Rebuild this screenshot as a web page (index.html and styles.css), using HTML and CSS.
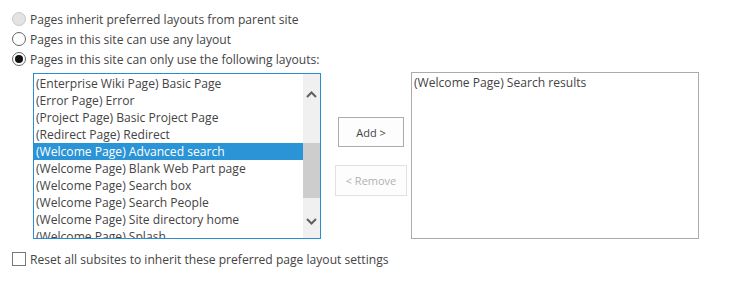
FILE: index.html
```html
<!DOCTYPE html>
<html lang="en">
<head>
    <meta charset="UTF-8">
    <title>Page layouts</title>
    <link rel="stylesheet" href="styles.css">
</head>
<body>

<div class="layout-settings">
    <!-- 继承选项 -->
    <label class="option">
        <input type="radio" name="mode" disabled>
        <span>Pages inherit preferred layouts from parent site</span>
    </label>
    <label class="option">
        <input type="radio" name="mode">
        <span>Pages in this site can use any layout</span>
    </label>
    <label class="option">
        <input type="radio" name="mode" checked>
        <span>Pages in this site can only use the following layouts:</span>
    </label>

    <!-- 布局选择 -->
    <div class="picker">
        <div class="listbox listbox-focus">
            <div class="list-items">
                <div class="item">(Enterprise Wiki Page) Basic Page</div>
                <div class="item">(Error Page) Error</div>
                <div class="item">(Project Page) Basic Project Page</div>
                <div class="item">(Redirect Page) Redirect</div>
                <div class="item selected">(Welcome Page) Advanced search</div>
                <div class="item">(Welcome Page) Blank Web Part page</div>
                <div class="item">(Welcome Page) Search box</div>
                <div class="item">(Welcome Page) Search People</div>
                <div class="item">(Welcome Page) Site directory home</div>
                <div class="item">(Welcome Page) Splash</div>
            </div>
            <div class="scrollbar">
                <div class="arrow arrow-up">
                    <svg width="11" height="7" viewBox="0 0 11 7"><path d="M1 6 L5.5 1.5 L10 6" fill="none" stroke="#606060" stroke-width="2"/></svg>
                </div>
                <div class="track">
                    <div class="thumb"></div>
                </div>
                <div class="arrow arrow-down">
                    <svg width="11" height="7" viewBox="0 0 11 7"><path d="M1 1 L5.5 5.5 L10 1" fill="none" stroke="#606060" stroke-width="2"/></svg>
                </div>
            </div>
        </div>

        <div class="buttons">
            <button class="btn">Add &gt;</button>
            <button class="btn btn-disabled">&lt; Remove</button>
        </div>

        <div class="listbox listbox-right">
            <div class="list-items">
                <div class="item">(Welcome Page) Search results</div>
            </div>
        </div>
    </div>

    <label class="option reset">
        <input type="checkbox">
        <span>Reset all subsites to inherit these preferred page layout settings</span>
    </label>
</div>

</body>
</html>
```

FILE: styles.css
```css
body {
    font-family: "Open Sans", "Noto Sans", sans-serif;
    font-size: 12.1px;
    color: #444444;
    background-color: #ffffff;
    margin: 0;
    padding: 0;
}
.layout-settings {
    padding: 9px 0 0 12px;
}
.option {
    display: flex;
    align-items: center;
    height: 20px;
    white-space: nowrap;
}
.option input {
    appearance: none;
    -webkit-appearance: none;
    width: 14px;
    height: 14px;
    margin: 0 4px 0 0;
    border: 1px solid #666666;
    background-color: #ffffff;
    box-sizing: border-box;
    flex-shrink: 0;
}
.option input[type="radio"] {
    border-radius: 50%;
    display: flex;
    align-items: center;
    justify-content: center;
}
.option input[type="radio"]:checked::after {
    content: "";
    width: 8px;
    height: 8px;
    border-radius: 50%;
    background-color: #111111;
}
.option input:disabled {
    border-color: #c8c8c8;
    background-color: #e3e3e3;
}
.picker {
    display: flex;
    align-items: flex-start;
    margin: 3px 0 0 21px;
}
.listbox {
    width: 288px;
    height: 167px;
    border: 1px solid #ababab;
    box-sizing: border-box;
    overflow: hidden;
    display: flex;
}
.listbox-focus {
    border-color: #2a8dd4;
    height: 166px;
    margin-top: 1px;
}
.list-items {
    flex: 1;
    overflow: hidden;
    padding-top: 1px;
}
.item {
    height: 17px;
    line-height: 17px;
    padding-left: 2px;
    white-space: nowrap;
}
.item.selected {
    background-color: #2a94d6;
    color: #ffffff;
}
.scrollbar {
    width: 17px;
    background-color: #f0f0f0;
    display: flex;
    flex-direction: column;
}
.arrow {
    display: flex;
    align-items: center;
    justify-content: center;
}
.arrow-up {
    height: 40px;
}
.arrow-down {
    height: 34px;
}
.track {
    flex: 1;
    padding-top: 29px;
}
.thumb {
    height: 55px;
    background-color: #cdcdcd;
}
.buttons {
    width: 90px;
    padding-left: 10px;
    box-sizing: border-box;
    display: flex;
    flex-direction: column;
    align-items: center;
    gap: 18px;
    padding-top: 45px;
}
.btn {
    font-family: "Open Sans", "Noto Sans", sans-serif;
    font-size: 11px;
    color: #444444;
    background-color: #fdfdfd;
    border: 1px solid #ababab;
    height: 30px;
    width: 66px;
    padding: 0;
}
.btn-disabled {
    color: #b1b1b1;
    border-color: #e1e1e1;
    width: 72px;
    height: 31px;
}
.reset {
    margin-top: 10px;
}
.reset input {
    border-color: #777777;
}
```
